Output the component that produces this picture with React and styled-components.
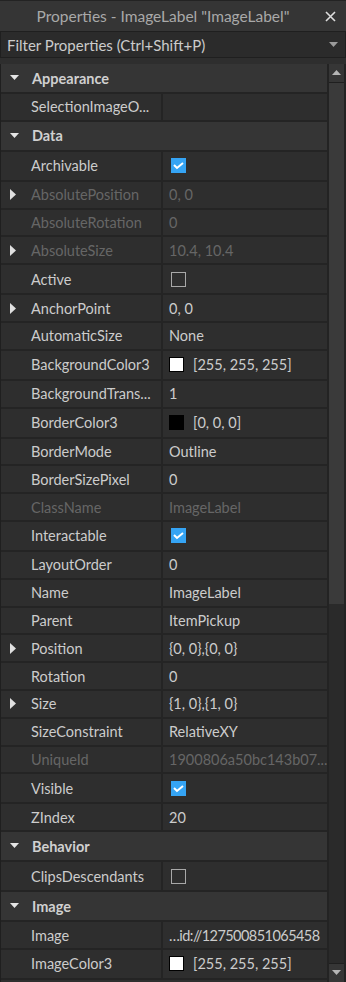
import React from 'react';
import styled, { createGlobalStyle } from 'styled-components';

const GlobalStyle = createGlobalStyle`
  html, body {
    margin: 0;
    padding: 0;
    background: #2e2e2e;
  }
  body {
    font-family: Lato, "Open Sans", sans-serif;
    overflow: hidden;
  }
`;

const rows = [
  { header: 'Appearance' },
  { name: 'SelectionImageO...', value: '' },
  { header: 'Data' },
  { name: 'Archivable', check: true },
  { name: 'AbsolutePosition', value: '0, 0', expand: true, disabled: true },
  { name: 'AbsoluteRotation', value: '0', disabled: true },
  { name: 'AbsoluteSize', value: '10.4, 10.4', expand: true, disabled: true },
  { name: 'Active', check: false },
  { name: 'AnchorPoint', value: '0, 0', expand: true },
  { name: 'AutomaticSize', value: 'None' },
  { name: 'BackgroundColor3', swatch: '#ffffff', value: '[255, 255, 255]' },
  { name: 'BackgroundTrans...', value: '1' },
  { name: 'BorderColor3', swatch: '#000000', value: '[0, 0, 0]' },
  { name: 'BorderMode', value: 'Outline' },
  { name: 'BorderSizePixel', value: '0' },
  { name: 'ClassName', value: 'ImageLabel', disabled: true },
  { name: 'Interactable', check: true },
  { name: 'LayoutOrder', value: '0' },
  { name: 'Name', value: 'ImageLabel' },
  { name: 'Parent', value: 'ItemPickup' },
  { name: 'Position', value: '{0, 0},{0, 0}', expand: true },
  { name: 'Rotation', value: '0' },
  { name: 'Size', value: '{1, 0},{1, 0}', expand: true },
  { name: 'SizeConstraint', value: 'RelativeXY' },
  { name: 'UniqueId', value: '1900806a50bc143b07...', disabled: true },
  { name: 'Visible', check: true },
  { name: 'ZIndex', value: '20' },
  { header: 'Behavior' },
  { name: 'ClipsDescendants', check: false },
  { header: 'Image' },
  { name: 'Image', value: '…id://127500851065458', tight: true },
  { name: 'ImageColor3', swatch: '#ffffff', value: '[255, 255, 255]' },
];

const Panel = styled.div`
  width: 346px;
  height: 982px;
  display: flex;
  flex-direction: column;
  background: #2e2e2e;
  overflow: hidden;
`;

const TitleBar = styled.div`
  height: 30px;
  flex: none;
  border-top: 1px solid #232323;
  background: #353535;
  display: flex;
  align-items: center;
  justify-content: center;
  padding-right: 20px;
  position: relative;
  color: #a9a9a9;
  font-size: 15.5px;
`;

const CloseButton = styled.span`
  position: absolute;
  right: 8px;
  top: 7px;
  width: 16px;
  height: 16px;
  display: flex;
  align-items: center;
  justify-content: center;
`;

const FilterBar = styled.div`
  height: 25px;
  flex: none;
  border: 1px solid #1f1f1f;
  background: #2b2b2b;
  display: flex;
  align-items: center;
  justify-content: space-between;
  padding: 0 7px 0 6px;
  color: #cccccc;
  font-size: 15px;
`;

const Body = styled.div`
  flex: 1;
  display: flex;
  margin-top: 6px;
  min-height: 0;
`;

const List = styled.div`
  width: 327px;
  flex: none;
  border-left: 1px solid #1f1f1f;
  box-sizing: border-box;
  overflow: hidden;
`;

const HeaderRow = styled.div`
  height: 30px;
  box-sizing: border-box;
  display: flex;
  align-items: center;
  background: #353535;
  border-bottom: 2px solid #242424;
  color: #d0d0d0;
  font-weight: 700;
  font-size: 14.5px;
  padding-left: 9px;
  gap: 13px;
`;

const Row = styled.div`
  height: ${({ $tall }) => ($tall ? '30px' : '27.8px')};
  box-sizing: border-box;
  display: grid;
  grid-template-columns: 162px 1fr;
  background: #2e2e2e;
  border-bottom: 2px solid #242424;
  font-size: 14.5px;
`;

const NameCell = styled.div`
  display: flex;
  align-items: center;
  padding-left: 9px;
  gap: 14px;
  border-right: 2px solid #242424;
  color: ${({ $disabled }) => ($disabled ? '#666666' : '#cccccc')};
  white-space: nowrap;
  overflow: hidden;
`;

const Arrow = styled.span`
  width: 7px;
  flex: none;
  display: flex;
  justify-content: center;
`;

const ValueCell = styled.div`
  display: flex;
  align-items: center;
  padding-left: 6px;
  gap: 9px;
  color: ${({ $disabled }) => ($disabled ? '#666666' : '#cccccc')};
  white-space: nowrap;
  overflow: hidden;
`;

const ValueText = styled.span`
  letter-spacing: ${({ $tight }) => ($tight ? '-0.55px' : 'normal')};
`;

const CheckBox = styled.span`
  width: 15px;
  height: 15px;
  margin-left: 2px;
  box-sizing: border-box;
  display: flex;
  align-items: center;
  justify-content: center;
  background: ${({ $on }) => ($on ? '#35a4f4' : 'transparent')};
  border: ${({ $on }) => ($on ? 'none' : '1px solid #a8a8a8')};
`;

const Swatch = styled.span`
  width: 15px;
  height: 15px;
  box-sizing: border-box;
  background: ${({ $color }) => $color};
  border: 1px solid #000;
  flex: none;
`;

const ScrollBar = styled.div`
  flex: 1;
  display: flex;
  flex-direction: column;
  background: #2a2a2a;
  border-left: 2px solid #232323;
  border-right: 2px solid #232323;
`;

const ScrollButton = styled.div`
  height: 18px;
  flex: none;
  display: flex;
  align-items: center;
  justify-content: center;
  background: #363636;
  border-bottom: ${({ $down }) => ($down ? 'none' : '1px solid #1f1f1f')};
  border-top: ${({ $down }) => ($down ? '1px solid #1f1f1f' : 'none')};
`;

const Thumb = styled.div`
  height: 521px;
  flex: none;
  background: #3a3a3a;
`;

const Track = styled.div`
  flex: 1;
`;

function Triangle({ dir, color = '#e0e0e0' }) {
  if (dir === 'down') {
    return (
      <svg width="9" height="6" viewBox="0 0 9 6">
        <polygon points="0,0 9,0 4.5,5" fill={color} />
      </svg>
    );
  }
  if (dir === 'up') {
    return (
      <svg width="9" height="6" viewBox="0 0 9 6">
        <polygon points="0,5 9,5 4.5,0" fill={color} />
      </svg>
    );
  }
  return (
    <svg width="7" height="11" viewBox="0 0 7 11">
      <polygon points="0,0 6,5.5 0,11" fill={color} />
    </svg>
  );
}

function Check() {
  return (
    <svg width="11" height="9" viewBox="0 0 11 9">
      <polyline points="1,4 4,7 10,2" fill="none" stroke="#ffffff" strokeWidth="2" />
    </svg>
  );
}

function PropertyRow({ row }) {
  if (row.header) {
    return (
      <HeaderRow>
        <Triangle dir="down" color="#e6e6e6" />
        <span>{row.header}</span>
      </HeaderRow>
    );
  }
  const tall = row.check !== undefined || !!row.swatch;
  return (
    <Row $tall={tall}>
      <NameCell $disabled={row.disabled}>
        <Arrow>{row.expand && <Triangle dir="right" />}</Arrow>
        <span>{row.name}</span>
      </NameCell>
      <ValueCell $disabled={row.disabled}>
        {row.check !== undefined && (
          <CheckBox $on={row.check}>{row.check && <Check />}</CheckBox>
        )}
        {row.swatch && <Swatch $color={row.swatch} />}
        {row.value && <ValueText $tight={row.tight}>{row.value}</ValueText>}
      </ValueCell>
    </Row>
  );
}

export default function App() {
  return (
    <>
      <GlobalStyle />
      <Panel>
        <TitleBar>
          Properties - ImageLabel &quot;ImageLabel&quot;
          <CloseButton>
            <svg width="11" height="11" viewBox="0 0 11 11">
              <path d="M1 1 L10 10 M10 1 L1 10" stroke="#dddddd" strokeWidth="1.6" />
            </svg>
          </CloseButton>
        </TitleBar>
        <FilterBar>
          <span>Filter Properties (Ctrl+Shift+P)</span>
          <Triangle dir="down" color="#9a9a9a" />
        </FilterBar>
        <Body>
          <List>
            {rows.map((row, i) => (
              <PropertyRow key={i} row={row} />
            ))}
          </List>
          <ScrollBar>
            <ScrollButton>
              <Triangle dir="up" color="#b5b5b5" />
            </ScrollButton>
            <Thumb />
            <Track />
            <ScrollButton $down>
              <Triangle dir="down" color="#b5b5b5" />
            </ScrollButton>
          </ScrollBar>
        </Body>
      </Panel>
    </>
  );
}
